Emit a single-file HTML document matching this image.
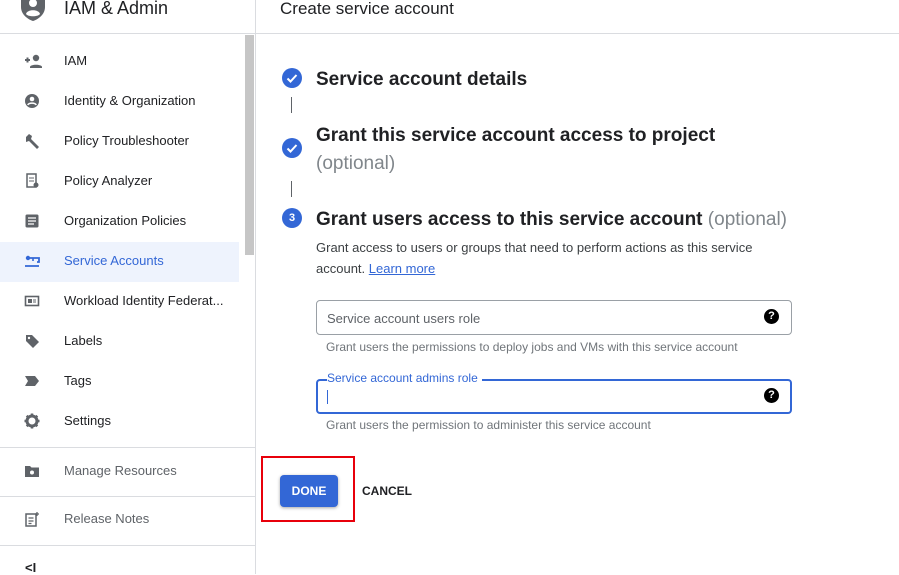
<!DOCTYPE html>
<html><head><style>
*{box-sizing:border-box;margin:0;padding:0}
body{width:899px;height:574px;overflow:hidden;background:#fff;font-family:"Liberation Sans",Arial,sans-serif;color:#202124;position:relative}
.abs{position:absolute}
.nav{position:absolute;left:0;width:239px;height:40px;font-size:13px;line-height:40px;padding-left:64px;color:#202124}
.nav svg{position:absolute;left:24px;top:12px}
.sep{position:absolute;left:0;width:255px;height:1px;background:#dadce0}
.h{position:absolute;left:316px;font-size:19px;font-weight:bold;color:#202124}
.circ{position:absolute;left:282px;width:20px;height:20px;border-radius:50%;background:#3367d6;color:#fff;text-align:center}
.vl{position:absolute;left:291px;width:1px;height:16px;background:#5f6368}
.help{position:absolute;left:326px;font-size:12px;color:#70757a}
.q{position:absolute;right:12px;top:8px;width:15px;height:15px;border-radius:50%;background:#000;color:#fff;font-size:11px;font-weight:bold;text-align:center;line-height:15px}
</style></head><body>
<svg class="abs" style="left:20px;top:-3px" width="26" height="24" viewBox="0 0 26 24"><path d="M1 0 H25 V10 C25 17 19 22 13 24 C7 22 1 17 1 10Z" fill="#5f6368"/><circle cx="13" cy="6" r="4" fill="#fff"/><path d="M6 17 C7 12 19 12 20 17 C18 20 8 20 6 17Z" fill="#fff"/></svg>
<div class="abs" style="left:64px;top:-2px;font-size:18px;color:#202124">IAM &amp; Admin</div>
<div class="abs" style="left:280px;top:-1px;font-size:17px;color:#202124">Create service account</div>
<div class="abs" style="left:0;top:33px;width:899px;height:1px;background:#dadce0"></div>
<div class="abs" style="left:255px;top:0;width:1px;height:574px;background:#dadce0"></div>
<div class="abs" style="left:245px;top:35px;width:9px;height:220px;background:#c6c6c6"></div>
<div class="abs" style="left:0;top:242px;width:239px;height:40px;background:#eef3fd"></div>

<div class="nav" style="top:41px"><svg width="18" height="16" viewBox="0 0 18 16"><path d="M1 7h5M3.5 4.5v5" stroke="#5f6368" stroke-width="2"/><circle cx="12" cy="5" r="3.2" fill="#5f6368"/><path d="M6 14c0-3 12-3 12 0v1H6z" fill="#5f6368"/></svg>IAM</div>
<div class="nav" style="top:81px"><svg width="16" height="16" viewBox="0 0 16 16"><circle cx="8" cy="8" r="7" fill="#5f6368"/><circle cx="8" cy="6" r="2.3" fill="#fff"/><path d="M3.8 12c1-2.5 7.4-2.5 8.4 0" stroke="#fff" stroke-width="1.6" fill="none"/></svg>Identity &amp; Organization</div>
<div class="nav" style="top:121px"><svg width="16" height="16" viewBox="0 0 16 16"><path d="M2 4l3-3 3 2-1 3 8 8-2 2-8-8-3 1z" fill="#5f6368"/></svg>Policy Troubleshooter</div>
<div class="nav" style="top:161px"><svg width="16" height="16" viewBox="0 0 16 16"><rect x="3" y="1" width="9" height="13" fill="none" stroke="#5f6368" stroke-width="1.5"/><path d="M5 5h5M5 8h5" stroke="#5f6368"/><circle cx="12" cy="12" r="2.5" fill="#5f6368"/></svg>Policy Analyzer</div>
<div class="nav" style="top:201px"><svg width="16" height="16" viewBox="0 0 16 16"><rect x="1.5" y="1.5" width="13" height="13" rx="1.5" fill="#5f6368"/><path d="M4 5h8M4 8h8M4 11h6" stroke="#fff" stroke-width="1.2"/></svg>Organization Policies</div>
<div class="nav" style="top:241px;color:#3367d6"><svg width="16" height="16" viewBox="0 0 16 16"><circle cx="4" cy="5" r="2.2" fill="#3367d6"/><path d="M6 5h9v4h-2M1 13h14" stroke="#3367d6" stroke-width="1.8" fill="none"/><path d="M9 5v3" stroke="#3367d6" stroke-width="1.6"/></svg>Service Accounts</div>
<div class="nav" style="top:281px"><svg width="16" height="16" viewBox="0 0 16 16"><rect x="1.5" y="3.5" width="13" height="9" fill="none" stroke="#5f6368" stroke-width="1.6"/><rect x="4" y="6" width="4" height="4" fill="#5f6368"/><path d="M9 7h3M9 9h3" stroke="#5f6368"/></svg>Workload Identity Federat...</div>
<div class="nav" style="top:321px"><svg width="16" height="16" viewBox="0 0 16 16"><path d="M2 2h6l7 7-6 6-7-7z" fill="#5f6368"/><circle cx="5" cy="5" r="1.2" fill="#fff"/></svg>Labels</div>
<div class="nav" style="top:361px"><svg width="16" height="16" viewBox="0 0 16 16"><path d="M1 3h10l4 5-4 5H1l3-5z" fill="#5f6368"/></svg>Tags</div>
<div class="nav" style="top:401px"><svg width="16" height="16" viewBox="0 0 16 16"><circle cx="8" cy="8" r="5" fill="none" stroke="#5f6368" stroke-width="3"/><path d="M8 0.5v3M8 12.5v3M0.5 8h3M12.5 8h3M2.7 2.7l2 2M11.3 11.3l2 2M2.7 13.3l2-2M11.3 4.7l2-2" stroke="#5f6368" stroke-width="2.5"/></svg>Settings</div>
<div class="sep" style="top:447px"></div>
<div class="nav" style="top:451px;color:#5f6368"><svg width="16" height="16" viewBox="0 0 16 16"><path d="M1 3h5l1.5 1.5H15V14H1z" fill="#5f6368"/><circle cx="8" cy="9.5" r="2" fill="#fff"/></svg>Manage Resources</div>
<div class="sep" style="top:496px"></div>
<div class="nav" style="top:499px;color:#5f6368"><svg width="16" height="16" viewBox="0 0 16 16"><rect x="2" y="3" width="10" height="12" fill="none" stroke="#5f6368" stroke-width="1.5"/><path d="M4.5 7h5M4.5 10h5M4.5 12.5h3M13 1v4M11 3h4" stroke="#5f6368" stroke-width="1.3"/></svg>Release Notes</div>
<div class="sep" style="top:545px"></div>
<div class="abs" style="left:25px;top:560px;font-size:13px;font-weight:bold;color:#202124">&lt;I</div>

<div class="circ" style="top:68px"><svg width="20" height="20" viewBox="0 0 20 20"><path d="M5.5 10.5l3 3 6-6.5" stroke="#fff" stroke-width="2" fill="none"/></svg></div>
<div class="h" style="top:69px">Service account details</div>
<div class="vl" style="top:97px"></div>
<div class="circ" style="top:138px"><svg width="20" height="20" viewBox="0 0 20 20"><path d="M5.5 10.5l3 3 6-6.5" stroke="#fff" stroke-width="2" fill="none"/></svg></div>
<div class="h" style="top:125px">Grant this service account access to project</div>
<div class="h" style="top:153px;color:#80868b;font-weight:normal">(optional)</div>
<div class="vl" style="top:181px"></div>
<div class="circ" style="top:208px;font-size:11px;font-weight:bold;line-height:20px">3</div>
<div class="h" style="top:209px">Grant users access to this service account <span style="color:#80868b;font-weight:normal">(optional)</span></div>
<div class="abs" style="left:316px;top:237px;font-size:13px;line-height:21px;color:#3c4043;width:460px">Grant access to users or groups that need to perform actions as this service account. <span style="color:#3367d6;text-decoration:underline">Learn more</span></div>

<div class="abs" style="left:316px;top:300px;width:476px;height:35px;border:1px solid #9aa0a6;border-radius:4px;font-size:13px;color:#5f6368;padding:10px 0 0 10px">Service account users role<div class="q">?</div></div>
<div class="help" style="top:340px">Grant users the permissions to deploy jobs and VMs with this service account</div>
<div class="abs" style="left:316px;top:379px;width:476px;height:35px;border:2px solid #3367d6;border-radius:4px"><div class="abs" style="left:9px;top:-10px;background:#fff;padding:0 4px 0 0;font-size:12px;color:#3367d6">Service account admins role</div><div class="abs" style="left:9px;top:9px;width:1px;height:14px;background:#3367d6"></div><div class="q" style="top:7px;right:11px">?</div></div>
<div class="help" style="top:418px">Grant users the permission to administer this service account</div>

<div class="abs" style="left:261px;top:456px;width:94px;height:66px;border:2px solid #e8000b"></div>
<div class="abs" style="left:280px;top:475px;width:58px;height:32px;background:#3367d6;border-radius:4px;box-shadow:0 1px 3px rgba(0,0,0,.35);color:#fff;font-size:12px;font-weight:bold;text-align:center;line-height:32px">DONE</div>
<div class="abs" style="left:362px;top:484px;font-size:12px;font-weight:bold;color:#202124">CANCEL</div>
</body></html>
